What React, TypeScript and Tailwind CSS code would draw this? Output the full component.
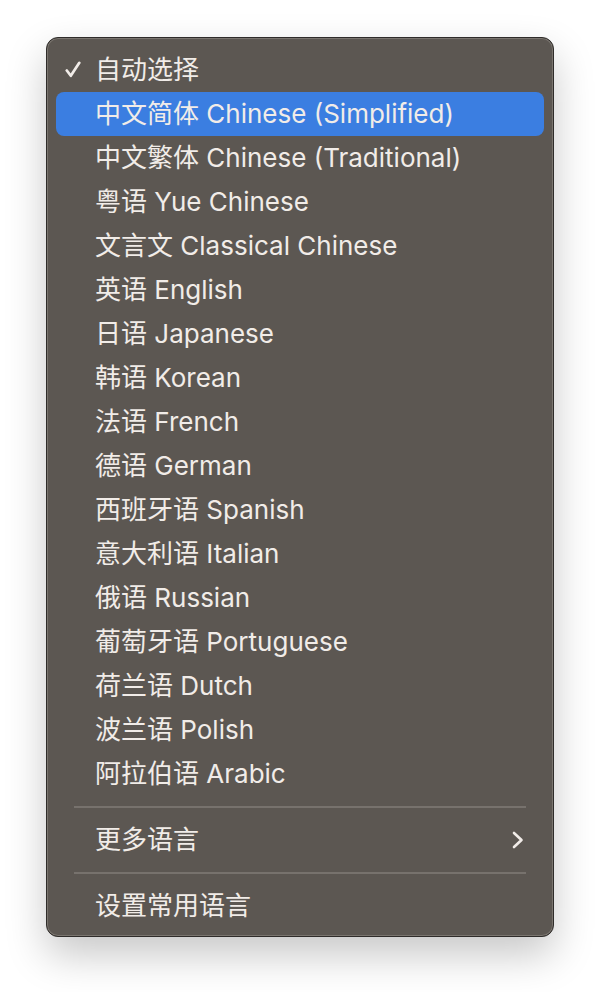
import React from "react";

const items = [
  "自动选择",
  "中文简体 Chinese (Simplified)",
  "中文繁体 Chinese (Traditional)",
  "粤语 Yue Chinese",
  "文言文 Classical Chinese",
  "英语 English",
  "日语 Japanese",
  "韩语 Korean",
  "法语 French",
  "德语 German",
  "西班牙语 Spanish",
  "意大利语 Italian",
  "俄语 Russian",
  "葡萄牙语 Portuguese",
  "荷兰语 Dutch",
  "波兰语 Polish",
  "阿拉伯语 Arabic",
];

function Check() {
  return (
    <svg width="16" height="17" viewBox="0 0 16 17" className="absolute left-[9px] top-[13px]">
      <path d="M1.8 9.5 L5.8 14.8 L14.3 1.8" fill="none" stroke="#f1ece8" strokeWidth="2.7" strokeLinecap="round" strokeLinejoin="round" />
    </svg>
  );
}

function Row({ label, checked, active }: { label: string; checked?: boolean; active?: boolean }) {
  return (
    <div
      className={`relative mx-[9px] flex h-[44px] items-center rounded-[8px] pl-[39px] ${
        active ? "bg-[#3b7ee1]" : ""
      }`}
    >
      {checked && <Check />}
      <span className="text-[26px] leading-none text-[#f1ece8]">{label}</span>
    </div>
  );
}

function Sep() {
  return (
    <div className="flex h-[22px] items-center px-[27px]">
      <div className="h-[2px] w-full bg-[#77726d]" />
    </div>
  );
}

export default function App() {
  return (
    <div
      className="h-[992px] w-[600px] bg-white pl-[46px] pt-[37px]"
      style={{ fontFamily: '"Inter", "Noto Sans CJK SC", sans-serif' }}
    >
      <div className="h-[900px] w-[508px] rounded-[12px] border border-[#2f2c2a] bg-[#5c5752] pb-[8px] pt-[10px] shadow-[inset_0_0_0_1px_#7a756f,0_18px_40px_rgba(0,0,0,0.22)]">
        {items.map((it, i) => (
          <Row key={it} label={it} checked={i === 0} active={i === 1} />
        ))}
        <Sep />
        <div className="relative mx-[9px] flex h-[44px] items-center pl-[39px]">
          <span className="text-[26px] leading-none text-[#f1ece8]">更多语言</span>
          <svg width="12" height="18" viewBox="0 0 12 18" className="absolute right-[20px] top-[13px]">
            <path d="M2 2 L9.5 9 L2 16" fill="none" stroke="#f1ece8" strokeWidth="2.6" strokeLinecap="round" strokeLinejoin="round" />
          </svg>
        </div>
        <Sep />
        <Row label="设置常用语言" />
      </div>
    </div>
  );
}
